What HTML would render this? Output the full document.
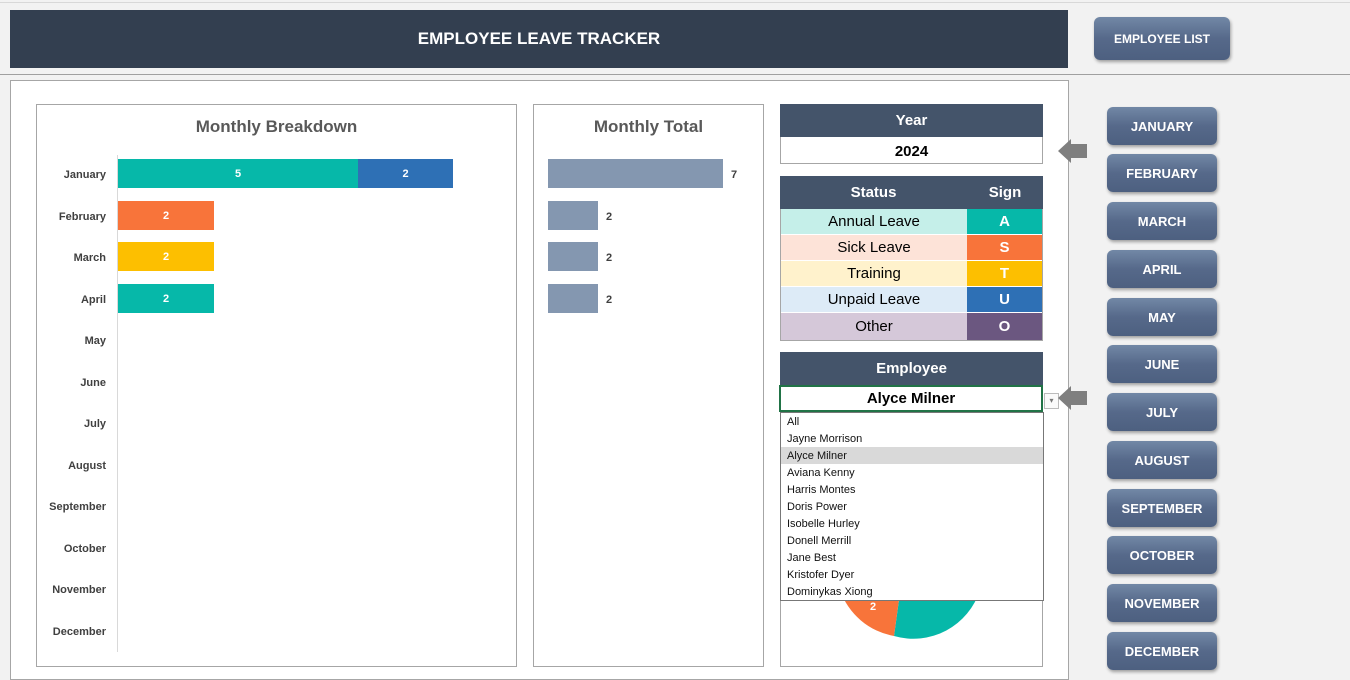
<!DOCTYPE html><html><head><style>
*{margin:0;padding:0;box-sizing:border-box}
body{width:1350px;height:675px;background:#f2f2f2;font-family:"Liberation Sans",sans-serif;position:relative;overflow:hidden}
.a{position:absolute}
.btn{position:absolute;background:linear-gradient(#7288a6,#56698a 50%,#4d6080);border-radius:6px;color:#fff;font-weight:bold;font-size:13px;display:flex;align-items:center;justify-content:center;box-shadow:1px 2px 3px rgba(0,0,0,.35)}
.lbl{position:absolute;width:70px;left:36px;text-align:right;font-size:11px;font-weight:bold;color:#404040}
.bar{position:absolute;height:29px;color:#fff;font-size:11px;font-weight:bold;display:flex;align-items:center;justify-content:center}
.cell{position:absolute;display:flex;align-items:center;justify-content:center;font-size:15px}
.dd{position:absolute;left:787px;font-size:11px;color:#111}
</style></head><body>
<div class="a" style="left:0;top:2px;width:1350px;height:1px;background:#d8d8d8"></div>
<div class="a" style="left:10px;top:10px;width:1058px;height:58px;background:#333f50;color:#fff;font-weight:bold;font-size:17px;display:flex;align-items:center;justify-content:center">EMPLOYEE LEAVE TRACKER</div>
<div class="btn" style="left:1094px;top:17px;width:136px;height:43px;font-size:12px">EMPLOYEE LIST</div>
<div class="a" style="left:0;top:74px;width:1350px;height:1px;background:#a0a0a0"></div>
<div class="a" style="left:10px;top:80px;width:1059px;height:600px;background:#fff;border:1px solid #a6a6a6"></div>

<div class="a" style="left:36px;top:104px;width:481px;height:563px;border:1px solid #a6a6a6;background:#fff"></div>
<div class="a" style="left:36px;top:117px;width:481px;text-align:center;font-size:17px;font-weight:bold;color:#595959">Monthly Breakdown</div>
<div class="a" style="left:117px;top:155px;width:1px;height:497px;background:#d9d9d9"></div>
<div class="lbl" style="top:169px">January</div><div class="lbl" style="top:211px">February</div><div class="lbl" style="top:252px">March</div><div class="lbl" style="top:294px">April</div><div class="lbl" style="top:335px">May</div><div class="lbl" style="top:377px">June</div><div class="lbl" style="top:418px">July</div><div class="lbl" style="top:460px">August</div><div class="lbl" style="top:501px">September</div><div class="lbl" style="top:543px">October</div><div class="lbl" style="top:584px">November</div><div class="lbl" style="top:626px">December</div>
<div class="bar" style="left:118px;top:159px;width:240px;background:#06b8a9">5</div>
<div class="bar" style="left:358px;top:159px;width:95px;background:#2e70b5">2</div>
<div class="bar" style="left:118px;top:201px;width:96px;background:#f8743a">2</div>
<div class="bar" style="left:118px;top:242px;width:96px;background:#fdbf00">2</div>
<div class="bar" style="left:118px;top:284px;width:96px;background:#06b8a9">2</div>

<div class="a" style="left:533px;top:104px;width:231px;height:563px;border:1px solid #a6a6a6;background:#fff"></div>
<div class="a" style="left:533px;top:117px;width:231px;text-align:center;font-size:17px;font-weight:bold;color:#595959">Monthly Total</div>
<div class="bar" style="left:548px;top:159px;width:175px;background:#8497b0"></div><div class="a" style="left:731px;top:169px;font-size:11px;font-weight:bold;color:#404040">7</div>
<div class="bar" style="left:548px;top:201px;width:50px;background:#8497b0"></div><div class="a" style="left:606px;top:211px;font-size:11px;font-weight:bold;color:#404040">2</div>
<div class="bar" style="left:548px;top:242px;width:50px;background:#8497b0"></div><div class="a" style="left:606px;top:252px;font-size:11px;font-weight:bold;color:#404040">2</div>
<div class="bar" style="left:548px;top:284px;width:50px;background:#8497b0"></div><div class="a" style="left:606px;top:294px;font-size:11px;font-weight:bold;color:#404040">2</div>

<div class="a" style="left:780px;top:104px;width:263px;height:60px;border:1px solid #a6a6a6;background:#fff"></div>
<div class="cell" style="left:780px;top:104px;width:263px;height:33px;background:#44546a;color:#fff;font-weight:bold">Year</div>
<div class="cell" style="left:780px;top:138px;width:263px;height:26px;font-weight:bold;color:#000">2024</div>

<div class="a" style="left:780px;top:176px;width:263px;height:165px;border:1px solid #a6a6a6"></div>
<div class="cell" style="left:780px;top:176px;width:187px;height:33px;background:#44546a;color:#fff;font-weight:bold">Status</div>
<div class="cell" style="left:967px;top:176px;width:76px;height:33px;background:#44546a;color:#fff;font-weight:bold">Sign</div>
<div class="cell" style="left:781px;top:209px;width:186px;height:26px;background:#c5efe9;border-bottom:1px solid #fff">Annual Leave</div><div class="cell" style="left:967px;top:209px;width:75px;height:26px;background:#06b8a9;color:#fff;font-weight:bold;border-bottom:1px solid #fff">A</div>
<div class="cell" style="left:781px;top:235px;width:186px;height:26px;background:#fde3d8;border-bottom:1px solid #fff">Sick Leave</div><div class="cell" style="left:967px;top:235px;width:75px;height:26px;background:#f8743a;color:#fff;font-weight:bold;border-bottom:1px solid #fff">S</div>
<div class="cell" style="left:781px;top:261px;width:186px;height:26px;background:#fff2cc;border-bottom:1px solid #fff">Training</div><div class="cell" style="left:967px;top:261px;width:75px;height:26px;background:#fdbf00;color:#fff;font-weight:bold;border-bottom:1px solid #fff">T</div>
<div class="cell" style="left:781px;top:287px;width:186px;height:26px;background:#ddebf7;border-bottom:1px solid #fff">Unpaid Leave</div><div class="cell" style="left:967px;top:287px;width:75px;height:26px;background:#2e70b5;color:#fff;font-weight:bold;border-bottom:1px solid #fff">U</div>
<div class="cell" style="left:781px;top:313px;width:186px;height:27px;background:#d5c8d9">Other</div><div class="cell" style="left:967px;top:313px;width:75px;height:27px;background:#6b5780;color:#fff;font-weight:bold">O</div>

<div class="a" style="left:780px;top:352px;width:263px;height:315px;border:1px solid #a6a6a6;background:#fff"></div>
<svg class="a" style="left:830px;top:520px" width="160" height="130"><path d="M80,0 L150,70 A70,70 0 0 1 64,116 Z" fill="#06b8a9"/><path d="M80,0 L64,116 A70,70 0 0 1 10,70 Z" fill="#f8743a"/><text x="40" y="90" fill="#fff" font-size="11" font-weight="bold" font-family="Liberation Sans">2</text></svg>
<div class="cell" style="left:780px;top:352px;width:263px;height:33px;background:#44546a;color:#fff;font-weight:bold">Employee</div>
<div class="cell" style="left:779px;top:385px;width:264px;height:27px;border:2px solid #217346;background:#fff;font-weight:bold">Alyce Milner</div>
<div class="a" style="left:1044px;top:393px;width:15px;height:16px;border:1px solid #bbb;background:#fafafa;font-size:8px;color:#777;text-align:center;line-height:14px">▾</div>
<div class="a" style="left:780px;top:412px;width:264px;height:189px;border:1px solid #777;background:#fff"></div>
<div class="a" style="left:781px;top:447px;width:262px;height:17px;background:#d9d9d9"></div>
<div class="dd" style="top:416px">All</div><div class="dd" style="top:433px">Jayne Morrison</div><div class="dd" style="top:450px">Alyce Milner</div><div class="dd" style="top:467px">Aviana Kenny</div><div class="dd" style="top:484px">Harris Montes</div><div class="dd" style="top:501px">Doris Power</div><div class="dd" style="top:518px">Isobelle Hurley</div><div class="dd" style="top:535px">Donell Merrill</div><div class="dd" style="top:552px">Jane Best</div><div class="dd" style="top:569px">Kristofer Dyer</div><div class="dd" style="top:586px">Dominykas Xiong</div>

<svg class="a" style="left:1058px;top:139px" width="30" height="24"><path d="M0,12 L13,0 L13,5 L29,5 L29,19 L13,19 L13,24 Z" fill="#7f7f7f"/></svg>
<svg class="a" style="left:1058px;top:386px" width="30" height="24"><path d="M0,12 L13,0 L13,5 L29,5 L29,19 L13,19 L13,24 Z" fill="#7f7f7f"/></svg>

<div class="btn" style="left:1107px;top:107px;width:110px;height:38px">JANUARY</div>
<div class="btn" style="left:1107px;top:154px;width:110px;height:38px">FEBRUARY</div>
<div class="btn" style="left:1107px;top:202px;width:110px;height:38px">MARCH</div>
<div class="btn" style="left:1107px;top:250px;width:110px;height:38px">APRIL</div>
<div class="btn" style="left:1107px;top:298px;width:110px;height:38px">MAY</div>
<div class="btn" style="left:1107px;top:345px;width:110px;height:38px">JUNE</div>
<div class="btn" style="left:1107px;top:393px;width:110px;height:38px">JULY</div>
<div class="btn" style="left:1107px;top:441px;width:110px;height:38px">AUGUST</div>
<div class="btn" style="left:1107px;top:489px;width:110px;height:38px">SEPTEMBER</div>
<div class="btn" style="left:1107px;top:536px;width:110px;height:38px">OCTOBER</div>
<div class="btn" style="left:1107px;top:584px;width:110px;height:38px">NOVEMBER</div>
<div class="btn" style="left:1107px;top:632px;width:110px;height:38px">DECEMBER</div>
</body></html>
